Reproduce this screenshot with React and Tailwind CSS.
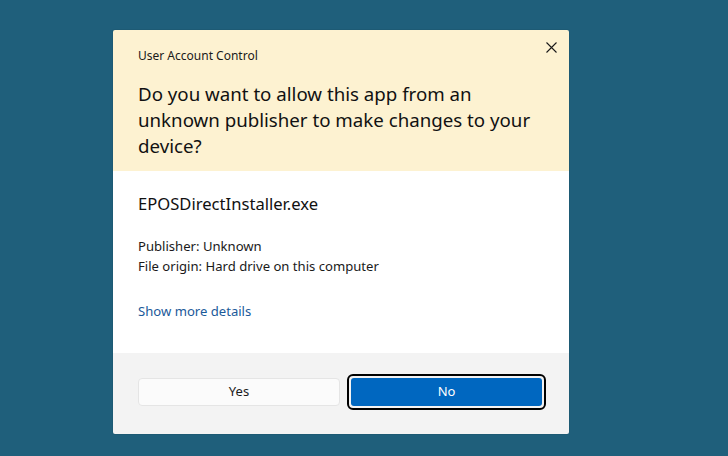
import React from "react";

export default function App() {
  return (
    <div className="w-[728px] h-[456px] bg-[#1f5f7b] pt-[30px] pl-[113px]" style={{ fontFamily: '"Noto Sans", "Open Sans", sans-serif' }}>
      <div className="w-[456px] h-[404px] flex flex-col overflow-hidden rounded-[2px] shadow-[0_0_0_1px_rgba(0,0,0,0.05)]">
        <div className="h-[141px] bg-[#fdf2d1] relative pl-[25px] pt-[17px]">
          <button className="absolute right-[11px] top-[10px] w-[14px] h-[14px] flex items-center justify-center text-[#1a1a1a]">
            <svg width="11" height="11" viewBox="0 0 11 11" fill="none" stroke="currentColor" strokeWidth="1.1">
              <path d="M0.5 0.5 L10.5 10.5 M10.5 0.5 L0.5 10.5" />
            </svg>
          </button>
          <div className="text-[12px] leading-[18px] text-[#1a1a1a]">User Account Control</div>
          <div className="mt-[16px] text-[18.7px] leading-[26px] text-[#111] w-[410px]">
            Do you want to allow this app from an unknown publisher to make changes to your device?
          </div>
        </div>
        <div className="h-[182px] bg-white pl-[25px] pt-[22px]">
          <div className="text-[16.6px] leading-[22px] text-[#111]">EPOSDirectInstaller.exe</div>
          <div className="mt-[21px] text-[13.1px] leading-[20px] text-[#1a1a1a]">
            <div>Publisher: Unknown</div>
            <div>File origin: Hard drive on this computer</div>
          </div>
          <div className="mt-[25px] text-[13.1px] leading-[20px] text-[#1b5a9a]">Show more details</div>
        </div>
        <div className="flex-1 bg-[#f3f3f3] flex items-start pt-[21px] pl-[25px] gap-[7px]">
          <button className="mt-[4px] w-[202px] h-[28px] bg-[#fbfbfb] border border-[#e5e5e5] rounded-[4px] text-[13px] text-[#1a1a1a]">Yes</button>
          <div className="w-[199px] h-[36px] border-2 border-black rounded-[6px] p-[2px]">
            <button className="w-full h-full bg-[#0067c0] rounded-[3px] text-[13px] text-white">No</button>
          </div>
        </div>
      </div>
    </div>
  );
}
